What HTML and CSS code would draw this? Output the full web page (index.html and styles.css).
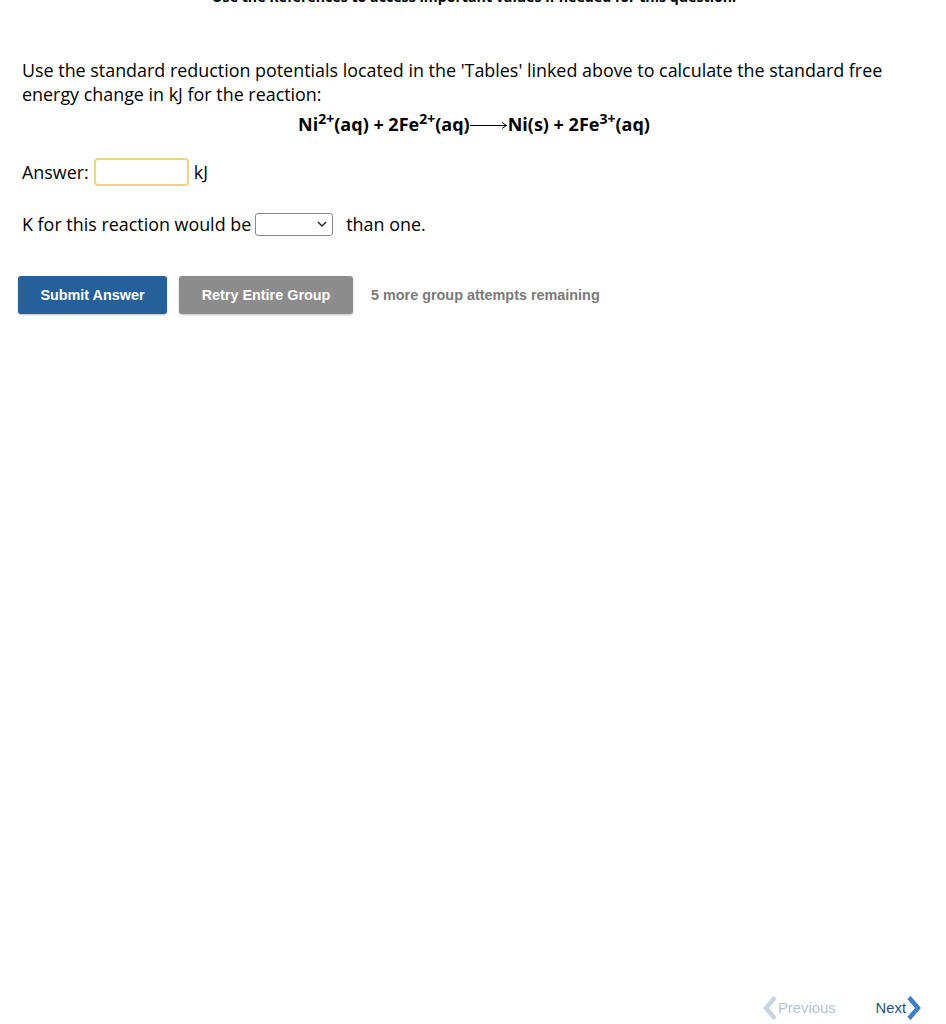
FILE: index.html
```html
<!DOCTYPE html>
<html>
<head>
<meta charset="utf-8">
<link rel="stylesheet" href="styles.css">
</head>
<body>
<div class="page">
  <div class="refs">Use the References to access important values if needed for this question.</div>
  <p class="prompt">Use the standard reduction potentials located in the 'Tables' linked above to calculate the standard free energy change in kJ for the reaction:</p>
  <div class="eq">Ni<sup>2+</sup>(aq) + 2Fe<sup>2+</sup>(aq)<span class="arrow"><svg width="38" height="10" viewBox="0 0 38 10"><path d="M0 5.5H36M32 2.5L36.5 5.5L32 8.5" fill="none" stroke="#000" stroke-width="1"/></svg></span>Ni(s) + 2Fe<sup>3+</sup>(aq)</div>
  <div class="row answer-row">
    <span>Answer:</span>
    <span class="input"></span>
    <span>kJ</span>
  </div>
  <div class="row k-row">
    <span>K for this reaction would be</span>
    <span class="select"><svg width="10" height="6" viewBox="0 0 10 6"><path d="M1 1L5 5L9 1" fill="none" stroke="#222" stroke-width="1.4"/></svg></span>
    <span class="than">than one.</span>
  </div>
  <div class="actions">
    <button class="btn submit">Submit Answer</button>
    <button class="btn retry">Retry Entire Group</button>
    <span class="remaining">5 more group attempts remaining</span>
  </div>
  <div class="spacer"></div>
  <div class="nav">
    <span class="prev"><svg width="14" height="24" viewBox="0 0 14 24"><path d="M12 1.5L3 12L12 22.5" fill="none" stroke="#c7d6e6" stroke-width="4.5"/></svg>Previous</span>
    <span class="next">Next<svg width="16" height="24" viewBox="0 0 16 24"><path d="M3 1.5L12 12L3 22.5" fill="none" stroke="#3d7fbf" stroke-width="4.5"/></svg></span>
  </div>
</div>
</body>
</html>
```

FILE: styles.css
```css
html, body {
  margin: 0;
  padding: 0;
  background: #fff;
}
body {
  font-family: "Open Sans", "Liberation Sans", sans-serif;
  color: #000;
}
.page {
  width: 946px;
  height: 1024px;
  display: flex;
  flex-direction: column;
  overflow: hidden;
}
.refs {
  margin-top: -12px;
  text-align: center;
  font-weight: 700;
  font-size: 14.2px;
  line-height: 18px;
  padding-left: 2px;
}
.prompt {
  margin: 52px 0 0 22px;
  width: 880px;
  font-size: 17.9px;
  line-height: 24px;
}
.eq {
  margin-top: 6px;
  text-align: center;
  font-weight: 700;
  font-size: 18px;
  line-height: 24px;
  padding-left: 2px;
}
.eq sup {
  font-size: 14px;
  line-height: 0;
  vertical-align: 7px;
}
.arrow {
  display: inline-block;
  width: 38px;
  vertical-align: 1px;
}
.arrow svg { display: block; }
.row {
  display: flex;
  align-items: center;
  font-size: 17.9px;
  line-height: 24px;
  margin-left: 22px;
}
.answer-row {
  margin-top: 22px;
  gap: 5px;
}
.input {
  width: 91px;
  height: 24px;
  border: 2px solid #f2d384;
  border-radius: 4px;
}
.k-row {
  margin-top: 26px;
  gap: 4px;
}
.select {
  box-sizing: border-box;
  width: 78px;
  height: 23px;
  border: 1px solid #8a8a8a;
  border-radius: 3px;
  display: flex;
  align-items: center;
  justify-content: flex-end;
  padding-right: 5px;
}
.select svg { display: block; }
.than { margin-left: 9px; }
.actions {
  margin: 40px 0 0 18px;
  display: flex;
  align-items: center;
}
.btn {
  font-family: "Liberation Sans", Arial, sans-serif;
  font-weight: 700;
  font-size: 14.4px;
  color: #fff;
  border: none;
  border-radius: 3px;
  height: 38px;
  padding: 0;
  box-shadow: 0 1px 2px rgba(0,0,0,0.25);
}
.submit {
  width: 149px;
  background: #25609a;
}
.retry {
  width: 174px;
  margin-left: 12px;
  background: #8c8c8c;
}
.remaining {
  margin-left: 18px;
  font-family: "Liberation Sans", Arial, sans-serif;
  font-weight: 700;
  font-size: 14.4px;
  color: #7a7a7a;
}
.spacer { flex: 1; }
.nav {
  display: flex;
  justify-content: flex-end;
  align-items: center;
  font-family: "Liberation Sans", Arial, sans-serif;
  font-size: 14.8px;
  padding: 0 24px 4px 0;
  height: 24px;
}
.nav svg { display: block; }
.prev {
  display: flex;
  align-items: center;
  color: #b5c4d4;
  gap: 1px;
}
.next {
  display: flex;
  align-items: center;
  color: #1f4f82;
  margin-left: 40px;
  gap: 0;
}
```
